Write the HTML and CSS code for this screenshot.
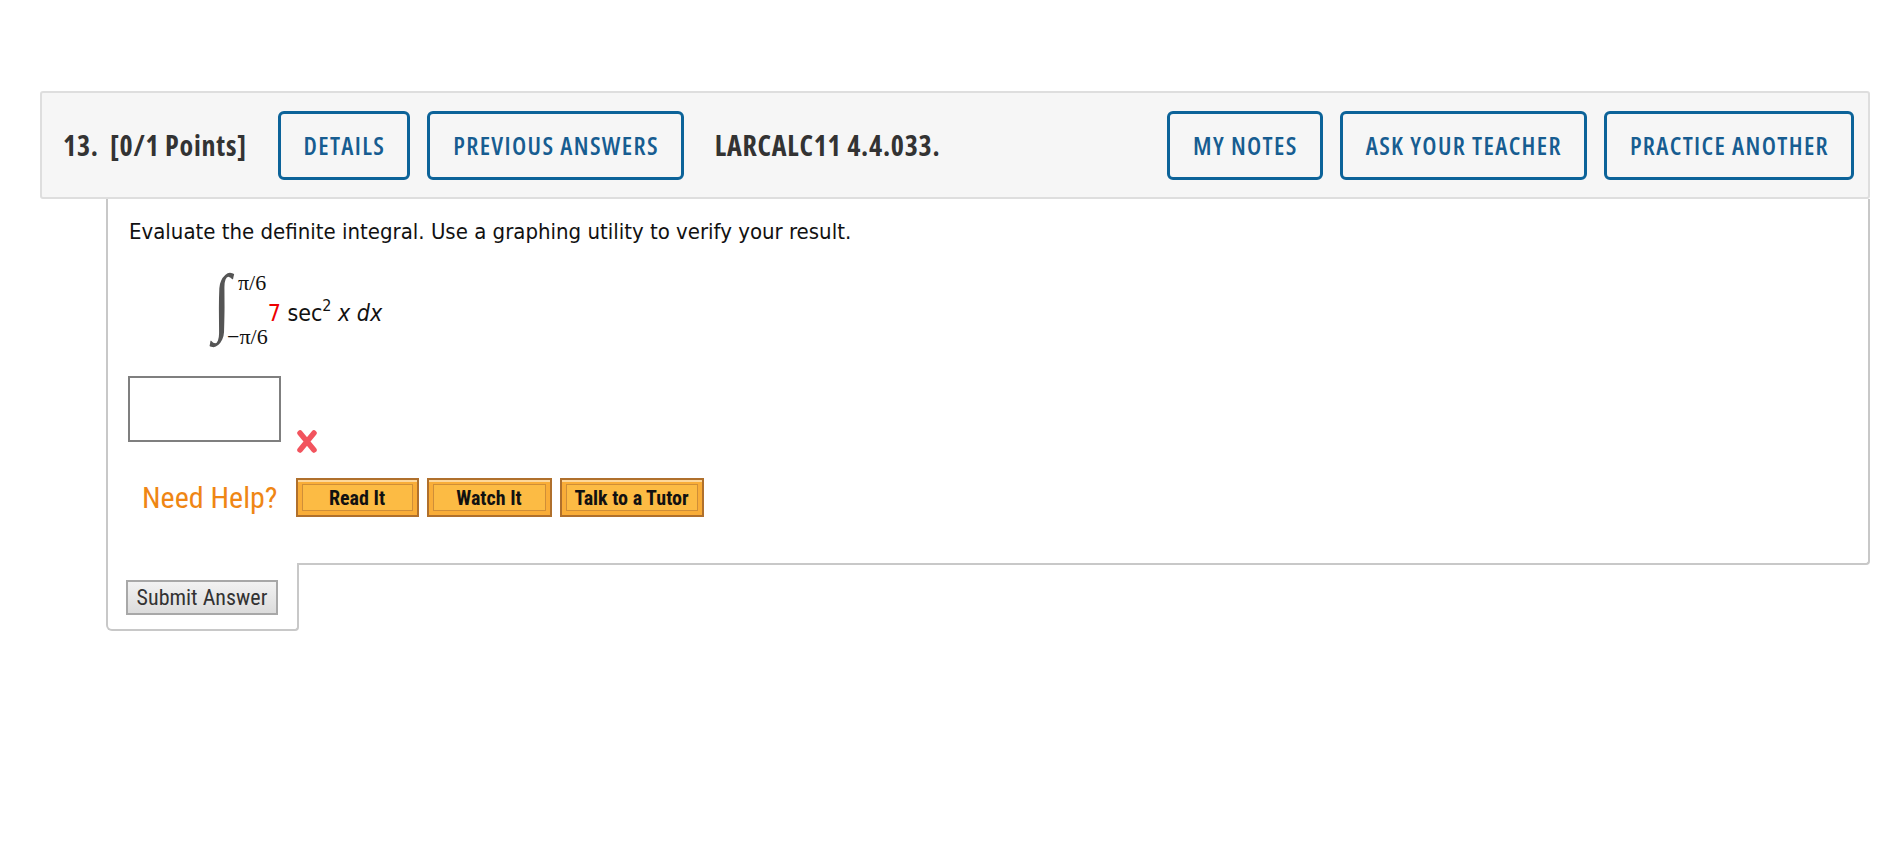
FILE: index.html
```html
<!DOCTYPE html>
<html lang="en">
<head>
<meta charset="utf-8">
<title>Question 13</title>
<link rel="stylesheet" href="styles.css">
</head>
<body>
<div class="page">
  <div class="qhead">
    <span class="qnum">13.&nbsp; [0/1 Points]</span>
    <a class="hbtn first">DETAILS</a>
    <a class="hbtn">PREVIOUS ANSWERS</a>
    <span class="qcode">LARCALC11 4.4.033.</span>
    <span class="spacer"></span>
    <a class="hbtn">MY NOTES</a>
    <a class="hbtn">ASK YOUR TEACHER</a>
    <a class="hbtn">PRACTICE ANOTHER</a>
  </div>
  <div class="qbody">
    <p class="prompt">Evaluate the definite integral. Use a graphing utility to verify your result.</p>
    <div class="integral">
      <span class="intsign">&#8747;</span>
      <span class="limits"><span class="up">&pi;/6</span><span class="lo">&minus;&pi;/6</span></span>
      <span class="integrand"><span class="coef">7</span> sec<sup>2</sup> <i>x dx</i></span>
    </div>
    <div class="answer">
      <span class="ansbox"></span>
      <svg class="wrong" width="22" height="25" viewBox="0 0 22 25" aria-label="incorrect">
        <path d="M4 4 L18 21 M18 4 L4 21" stroke="#f2545e" stroke-width="5.5" stroke-linecap="round" fill="none"/>
      </svg>
    </div>
    <div class="help">
      <span class="need">Need Help?</span>
      <span class="hb w1">Read It</span>
      <span class="hb w2">Watch It</span>
      <span class="hb w3">Talk to a Tutor</span>
    </div>
  </div>
  <div class="submit-tab"><button class="submit" type="button">Submit Answer</button></div>
</div>
</body>
</html>
```

FILE: styles.css
```css
html, body {
  margin: 0;
  padding: 0;
  background: #ffffff;
}

.page {
  padding: 91px 25px 0 40px;
}

/* ---------- header bar ---------- */
.qhead {
  display: flex;
  align-items: center;
  height: 108px;
  box-sizing: border-box;
  background: #f6f6f6;
  border: 2px solid #dedede;
  border-radius: 3px;
  padding: 0 14px 0 21px;
  font-family: "Open Sans", "Liberation Sans", sans-serif;
}

.qnum,
.qcode {
  font-size: 28px;
  font-weight: 700;
  font-stretch: 75%;
  letter-spacing: 0.75px;
  color: #333333;
  white-space: nowrap;
}

.qcode {
  margin-left: 31px;
}

.spacer {
  flex: 1;
}

.hbtn {
  display: flex;
  align-items: center;
  height: 69px;
  box-sizing: border-box;
  padding: 0 22px 0 23px;
  border: 3px solid #0c6399;
  border-radius: 6px;
  color: #175d91;
  font-size: 25px;
  font-weight: 600;
  font-stretch: 75%;
  letter-spacing: 1.35px;
  white-space: nowrap;
  margin-left: 17px;
}

.hbtn.first {
  margin-left: 31px;
}

/* ---------- question body ---------- */
.qbody {
  margin-left: 66px;
  border: 2px solid #c8c8c8;
  border-top: none;
  border-radius: 0 0 4px 0;
  padding: 20px 21px 0 21px;
  height: 366px;
  box-sizing: border-box;
  font-family: "DejaVu Sans", "Liberation Sans", sans-serif;
  font-stretch: condensed;
  color: #111111;
}

.prompt {
  margin: 0;
  font-size: 22px;
  line-height: 26px;
}

.integral {
  display: flex;
  align-items: center;
  margin: 29px 0 0 84px;
  height: 71px;
}

.intsign {
  display: block;
  font-family: "Liberation Serif", serif;
  font-stretch: normal;
  font-size: 50px;
  line-height: 71px;
  width: 14px;
  color: #555555;
  transform: translate(2px, -8px) scale(1.3, 1.52);
}

.limits {
  display: flex;
  flex-direction: column;
  justify-content: space-between;
  height: 76px;
  font-family: "Liberation Serif", serif;
  font-size: 22px;
  line-height: 22px;
  color: #111111;
}

.limits .up {
  margin-left: 11px;
}

.integrand {
  margin-left: 0;
  font-size: 23px;
  line-height: 28px;
  padding-top: 6px;
}

.integrand sup {
  font-size: 16px;
  vertical-align: 10px;
  line-height: 0;
}

.coef {
  color: #ee0000;
}

.answer {
  display: flex;
  align-items: flex-start;
  margin-top: 31px;
}

.ansbox {
  width: 153px;
  height: 66px;
  box-sizing: border-box;
  border: 2px solid #7f7f7f;
  margin-left: -1px;
  background: #ffffff;
}

.wrong {
  margin: 53px 0 0 15px;
}

.help {
  display: flex;
  align-items: center;
  margin-top: 24px;
  padding-left: 13px;
  gap: 8px;
}

.need {
  font-family: "Roboto Condensed", "Liberation Sans", sans-serif;
  font-size: 30px;
  color: #ef8614;
  margin-right: 10px;
}

.hb {
  display: flex;
  align-items: center;
  justify-content: center;
  height: 39px;
  box-sizing: border-box;
  border: 2px solid #b0702c;
  background: #fcbb44;
  box-shadow: inset 0 2px 0 #fdd79a, inset 0 0 0 4px #f9ad38, inset 0 0 0 5px #cf8e38;
  font-family: "Roboto Condensed", "Liberation Sans", sans-serif;
  font-weight: 700;
  font-size: 20px;
  color: #111111;
  white-space: nowrap;
}

.hb.w1 { width: 123px; }
.hb.w2 { width: 125px; }
.hb.w3 { width: 144px; }

/* ---------- submit tab ---------- */
.submit-tab {
  margin: -2px 0 0 66px;
  width: 193px;
  height: 68px;
  box-sizing: border-box;
  border: 2px solid #c8c8c8;
  border-top: none;
  border-radius: 0 0 4px 6px;
  background: #ffffff;
  padding: 17px 0 0 18px;
}

.submit {
  width: 152px;
  height: 35px;
  box-sizing: border-box;
  border: 2px solid #a8a8a8;
  border-radius: 0;
  background: linear-gradient(#f2f2f2, #dcdcdc);
  font-family: "Roboto Condensed", "Liberation Sans", sans-serif;
  font-size: 22px;
  color: #333333;
  padding: 0;
  white-space: nowrap;
}
```
